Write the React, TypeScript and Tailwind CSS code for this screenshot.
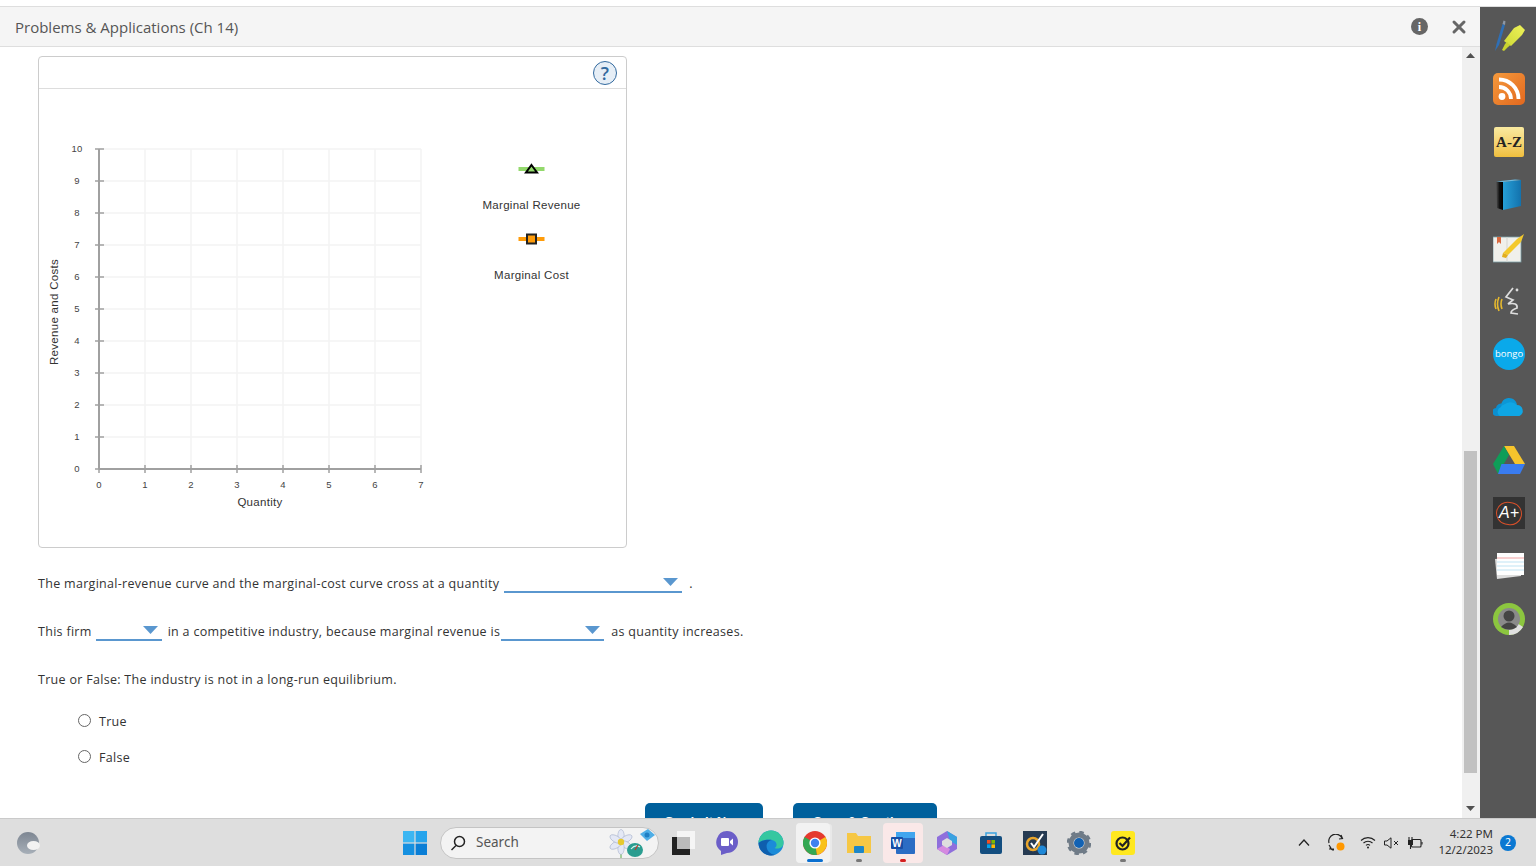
import React from 'react';
import { X } from 'lucide-react';

const bodyFont = "font-['Open_Sans',sans-serif]";

const Chart: React.FC = () => {
  const xs = [99, 145, 191, 237, 283, 329, 375, 421];
  const ys = [469, 437, 405, 373, 341, 309, 277, 245, 213, 181, 149];
  return (
    <svg width="587" height="458" viewBox="39 89 587 458" className="block">
      {xs.slice(1).map(x => <line key={x} x1={x} y1={149} x2={x} y2={469} stroke="#f3f3f3" strokeWidth="1.5" />)}
      {ys.slice(1).map(y => <line key={y} x1={99} y1={y} x2={421} y2={y} stroke="#f3f3f3" strokeWidth="1.5" />)}
      {ys.map(y => <line key={y} x1={95} y1={y} x2={104} y2={y} stroke="#a0a0a0" strokeWidth="1.5" />)}
      {xs.map(x => <line key={x} x1={x} y1={465} x2={x} y2={473} stroke="#a0a0a0" strokeWidth="1.5" />)}
      <line x1={99} y1={149} x2={99} y2={469} stroke="#a0a0a0" strokeWidth="2" />
      <line x1={99} y1={469} x2={421} y2={469} stroke="#a0a0a0" strokeWidth="2" />
      <g fontFamily="Liberation Sans, sans-serif" fontSize="9.5" fill="#444" textAnchor="middle">
        {ys.map((y, i) => <text key={y} x={77} y={y + 3}>{i}</text>)}
        {xs.map((x, i) => <text key={x} x={x} y={488}>{i}</text>)}
      </g>
      <g fontFamily="Liberation Sans, sans-serif" fontSize="11.5" fill="#333" textAnchor="middle">
        <text x={260} y={506}>Quantity</text>
        <text transform="translate(57.5 312) rotate(-90)">Revenue and Costs</text>
        <text x={531.5} y={209}>Marginal Revenue</text>
        <text x={531.5} y={279}>Marginal Cost</text>
      </g>
      <rect x={518.5} y={167} width={26} height={4} fill="#93d96c" />
      <path d="M531.5 165 L537 172.5 H526 Z" fill="#93d96c" stroke="#000" strokeWidth="2" />
      <rect x={518.5} y={237} width={26} height={4} fill="#ff9c0a" />
      <rect x={527} y={234.5} width={9} height={9} fill="#ff9c0a" stroke="#222" strokeWidth="2" />
    </svg>
  );
};

const Dropdown: React.FC<{ width: string }> = ({ width }) => (
  <span className={`inline-flex h-[20px] -mt-[2px] justify-end items-center pr-[4px] pb-[1px] border-b-2 border-[#5a97cf] ${width}`}>
    <svg width="15" height="8" viewBox="0 0 15 8"><path d="M0 0H15L7.5 8Z" fill="#5a97cf" /></svg>
  </span>
);

const Radio: React.FC<{ label: string; className?: string }> = ({ label, className }) => (
  <label className={`flex items-center h-[20px] ml-[78px] ${className ?? ''}`}>
    <span className="w-[13px] h-[13px] -mt-[1px] rounded-full border border-[#666] bg-white" />
    <span className="ml-[8px] pt-[2px] text-[12.5px] tracking-[0.29px] text-[#333]">{label}</span>
  </label>
);

const Pens = () => (
  <svg width="32" height="32" viewBox="0 0 32 32">
    <defs>
      <linearGradient id="hl" x1="0" y1="1" x2="1" y2="0">
        <stop offset="0" stopColor="#cfd936" />
        <stop offset="1" stopColor="#eef25a" />
      </linearGradient>
    </defs>
    <path d="M2 31 L3.5 24 L9.5 4 L12 5 L6 25 Z" fill="#2f6fb5" />
    <path d="M9.5 4 L10.5 0.5 L12.5 1.2 L12 5 Z" fill="#8d98a6" />
    <path d="M11 21 L21 8 L27 5 L32 10 L29 15 L18 26 L15 24 Z" fill="url(#hl)" />
    <path d="M12 24 L15 27 L17 25.5 L14 22 Z M9 30 L12 24 L15 27 L11 31 Z" fill="#c9d32e" />
  </svg>
);

const Rss = () => (
  <svg width="32" height="32" viewBox="0 0 32 32">
    <defs>
      <linearGradient id="rs" x1="0" y1="0" x2="1" y2="1">
        <stop offset="0" stopColor="#f59a3c" />
        <stop offset="1" stopColor="#e2681f" />
      </linearGradient>
    </defs>
    <rect width="32" height="32" rx="5" fill="url(#rs)" />
    <circle cx="9" cy="23.5" r="3.4" fill="#fff" />
    <path d="M6 14 A12 12 0 0 1 18 26" stroke="#fff" strokeWidth="3.8" fill="none" />
    <path d="M6 6.5 A19.5 19.5 0 0 1 25.5 26" stroke="#fff" strokeWidth="3.8" fill="none" />
  </svg>
);

const AZ = () => (
  <div className="w-[30px] h-[30px] rounded-[2px] bg-gradient-to-b from-[#f9eaa0] to-[#f0bf3c] flex items-center justify-center text-[15px] font-bold font-['Liberation_Serif',serif] text-[#222] leading-none">
    A-Z
  </div>
);

const Book = () => (
  <svg width="28" height="32" viewBox="0 0 28 32">
    <defs>
      <linearGradient id="sp" x1="0" y1="0" x2="1" y2="0">
        <stop offset="0" stopColor="#555" />
        <stop offset="0.5" stopColor="#111" />
        <stop offset="1" stopColor="#000" />
      </linearGradient>
      <linearGradient id="cv" x1="0" y1="0" x2="1" y2="0">
        <stop offset="0" stopColor="#26a0d8" />
        <stop offset="1" stopColor="#1372ad" />
      </linearGradient>
    </defs>
    <path d="M1 2.5 L8 3 V31 L2 29 Z" fill="url(#sp)" />
    <path d="M8 3 L26 1 V27 L8 31 Z" fill="url(#cv)" />
    <path d="M1 2.5 L20 0.5 L26 1 L8 3 Z" fill="#6dbce2" />
  </svg>
);

const Notebook = () => (
  <svg width="32" height="32" viewBox="0 0 32 32">
    <rect x="0" y="5" width="28" height="25" fill="#f0f0eb" stroke="#7ea0a8" strokeWidth="0.8" />
    <path d="M14 5 V30" stroke="#d5d5d0" />
    <path d="M4 5 H8 V12 L6 10 L4 12 Z" fill="#d9693f" />
    <path d="M10 21 L24 7 L31 2 L28 10 L15 23 Z" fill="#f3c92c" />
    <path d="M10 21 L15 23 L13 26 L9 25 Z" fill="#e2ae1e" />
  </svg>
);

const Speech = () => (
  <svg width="32" height="32" viewBox="0 0 32 32">
    <path d="M3 14 Q1 19 3 24 M6 12 Q3 19 6 26 M9 14 Q7 19 9 24" stroke="#e6b92e" strokeWidth="1.6" fill="none" />
    <path d="M20 3 L13 12 L20 15 L15 19 Q25 17 24 23 Q18 25 18 28 L25 29" stroke="#ddd" strokeWidth="1.7" fill="none" />
    <circle cx="24" cy="5" r="1.4" fill="#ddd" />
  </svg>
);

const Bongo = () => (
  <div className="w-[32px] h-[32px] rounded-full bg-[#0aa9ea] flex items-center justify-center text-[9.5px] text-white font-['Open_Sans',sans-serif] leading-none">
    bongo
  </div>
);

const Cloud = () => (
  <svg width="32" height="22" viewBox="0 0 32 22">
    <path d="M8 20 H4 A4 4 0 0 1 3 12 A5 5 0 0 1 10 8 L8 20 Z" fill="#0b8fd0" />
    <path d="M7 20 A5 5 0 0 1 8 11 A8.5 8.5 0 0 1 24 9 A5.8 5.8 0 0 1 26.5 20 Z" fill="#0fa6e4" />
    <path d="M8 10 A8 8 0 0 1 19 2.5 A8.5 8.5 0 0 1 24 9 A9 9 0 0 0 14 7 Z" fill="#0c97d6" />
  </svg>
);

const Drive = () => (
  <svg width="32" height="28" viewBox="0 0 32 28">
    <path d="M11 0 H21 L32 18 H22 Z" fill="#f6c42c" />
    <path d="M11 0 L0 18 L5 28 L16 9 Z" fill="#0f9d58" />
    <path d="M8.5 18 H32 L27 28 H5 Z" fill="#3a7cf0" />
  </svg>
);

const APlus = () => (
  <div className="relative w-[32px] h-[32px] bg-[#333] flex items-center justify-center">
    <span className="absolute left-[3px] top-[5px] w-[26px] h-[23px] rounded-full border-[1.5px] border-[#d8502a] rotate-12" />
    <span className="relative text-[16px] italic text-white font-['Liberation_Sans',sans-serif] leading-none">A+</span>
  </div>
);

const Cards = () => (
  <svg width="32" height="28" viewBox="0 0 32 28">
    <path d="M2 7 L28 5 V24 L4 27 Z" fill="#ddd" />
    <rect x="4" y="1" width="27" height="22" fill="#fff" />
    <path d="M4 6 H31" stroke="#f2a3a3" />
    <path d="M4 10 H31 M4 14 H31 M4 18 H31" stroke="#bfe3f3" />
  </svg>
);

const Profile = () => (
  <svg width="32" height="32" viewBox="0 0 32 32">
    <circle cx="16" cy="16" r="16" fill="#8cc63f" />
    <path d="M16 32 A16 16 0 0 0 30 24 L24 20 A9 9 0 0 1 16 27 Z" fill="#e0e0e0" />
    <circle cx="16" cy="16" r="11" fill="#8a8a8a" />
    <circle cx="16" cy="13" r="5.5" fill="#444" />
    <path d="M8 24 Q16 15 24 24 Q16 29 8 24 Z" fill="#444" />
  </svg>
);

const sideIcons = [Pens, Rss, AZ, Book, Notebook, Speech, Bongo, Cloud, Drive, APlus, Cards, Profile];

const TaskSlot: React.FC<{ bg?: string; mark?: string; children: React.ReactNode }> = ({ bg, mark, children }) => (
  <div className="relative w-[44px] h-[48px] flex items-center justify-center">
    {bg && <span className={`absolute top-[4px] bottom-[4px] rounded-[4px] ${bg}`} />}
    <span className="relative flex">{children}</span>
    {mark && <span className={`absolute bottom-[5px] left-1/2 -translate-x-1/2 h-[3px] rounded-full ${mark}`} />}
  </div>
);

const Taskbar: React.FC = () => (
  <div className="h-[48px] flex items-center bg-[#dedede] border-t border-[#cacaca] pl-[17px] font-['Noto_Sans',sans-serif]">
    <svg width="24" height="24" viewBox="0 0 24 24">
      <defs>
        <linearGradient id="mn" x1="0" y1="0" x2="0" y2="1">
          <stop offset="0" stopColor="#7d8692" />
          <stop offset="1" stopColor="#a7afb8" />
        </linearGradient>
      </defs>
      <circle cx="11" cy="12" r="11" fill="url(#mn)" />
      <ellipse cx="16.5" cy="14.5" rx="6.5" ry="4.5" fill="#f2f2f2" />
    </svg>
    <svg width="24" height="24" viewBox="0 0 24 24" className="ml-[362px]">
      <rect width="11.4" height="11.4" fill="#3cb6f2" />
      <rect x="12.6" width="11.4" height="11.4" fill="#26a4ec" />
      <rect y="12.6" width="11.4" height="11.4" fill="#1590e0" />
      <rect x="12.6" y="12.6" width="11.4" height="11.4" fill="#0a7ed6" />
    </svg>
    <div className="relative ml-[13px] w-[219px] h-[32px] rounded-full bg-[#f3f3f3] border border-[#c4c4c4] flex items-center pl-[9px]">
      <svg width="16" height="16" viewBox="0 0 16 16" fill="none" stroke="#222" strokeWidth="1.5">
        <circle cx="9.5" cy="6.5" r="5" />
        <path d="M6 10.5 L1.5 15" />
      </svg>
      <span className="ml-[10px] text-[13.5px] text-[#555]">Search</span>
      <svg width="52" height="30" viewBox="0 0 52 30" className="absolute right-[1px] top-0">
        <path d="M16 18 V30" stroke="#5aa845" strokeWidth="1" />
        {[0, 60, 120, 180, 240, 300].map(a => (
          <ellipse key={a} cx="16" cy="8" rx="3.2" ry="6.5" fill="#e4e8f5" stroke="#98a4c2" strokeWidth="0.5" transform={`rotate(${a} 16 14)`} />
        ))}
        <circle cx="16" cy="14" r="3.2" fill="#e6c92f" />
        <ellipse cx="30" cy="22" rx="8" ry="7" fill="#2a9d90" />
        <path d="M26 21 Q30 16 35 19" stroke="#d8f0ea" strokeWidth="1.2" fill="none" />
        <path d="M30 22 L33 17" stroke="#c0392b" strokeWidth="1.2" />
        <path d="M35 6 L43 1 L50 7 L42 13 Z" fill="#4faee6" />
        <circle cx="42" cy="7" r="2.5" fill="#1f7fc4" />
      </svg>
    </div>
    <div className="ml-[2px] flex items-center">
      <TaskSlot>
        <svg width="24" height="24" viewBox="0 0 24 24">
          <rect x="1" y="6" width="18" height="18" fill="#222" />
          <rect x="6" y="0" width="18" height="18" fill="#f5f5f5" />
          <rect x="6" y="6" width="13" height="12" fill="#bbb" />
        </svg>
      </TaskSlot>
      <TaskSlot>
        <svg width="24" height="26" viewBox="0 0 24 26">
          <path d="M12 1 A11 11 0 0 1 12 23 L6 25 V21 A11 11 0 0 1 12 1 Z" fill="#6b5ec8" />
          <rect x="6" y="8" width="8" height="8" rx="1" fill="#fff" />
          <path d="M15 11 L18 8.5 V15.5 L15 13 Z" fill="#fff" />
        </svg>
      </TaskSlot>
      <TaskSlot>
        <svg width="26" height="26" viewBox="0 0 26 26">
          <circle cx="13" cy="13" r="12.5" fill="#1b8bd8" />
          <path d="M0.5 13 A12.5 12.5 0 0 1 25.5 13 C25.5 18 20 19.5 16.5 18 C20 16 19 11 14 10 C8 9 3 11 0.5 13 Z" fill="#35c7a0" />
          <path d="M0.5 13 C3 11 8 9 14 10 C8 11 7 18 11 22 C13 24 16 25.5 18 24.5 A12.5 12.5 0 0 1 0.5 13 Z" fill="#0f5fae" />
        </svg>
      </TaskSlot>
      <TaskSlot bg="bg-[#f2f2f2] left-[3px] right-[7px] shadow-[3px_0_0_-1px_#e9e9e9]" mark="w-[16px] bg-[#0a6fd0]">
        <svg width="24" height="24" viewBox="0 0 24 24">
          <circle cx="12" cy="12" r="12" fill="#e53a2f" />
          <path d="M12 12 L1.6 6 A12 12 0 0 0 14 23.8 Z" fill="#34a853" />
          <path d="M12 12 L14 23.8 A12 12 0 0 0 22.4 6 Z" fill="#f9c21a" />
          <circle cx="12" cy="12" r="5.6" fill="#fff" />
          <circle cx="12" cy="12" r="4.2" fill="#3f82ee" />
        </svg>
      </TaskSlot>
      <TaskSlot mark="w-[6px] bg-[#777]">
        <svg width="24" height="22" viewBox="0 0 24 22">
          <path d="M0 1 H9 L11 4 H24 V21 H0 Z" fill="#f6c744" />
          <rect x="7" y="14" width="10" height="7" rx="1" fill="#1c86c8" />
        </svg>
      </TaskSlot>
      <TaskSlot bg="bg-[#fae8e8] left-[2px] right-[2px]" mark="w-[6px] bg-[#d42020]">
        <svg width="24" height="22" viewBox="0 0 24 22">
          <rect x="5" y="0" width="19" height="22" rx="1" fill="#2b6cc4" />
          <rect x="5" y="0" width="19" height="6" fill="#41a5ee" />
          <rect x="0" y="5" width="12" height="12" rx="1" fill="#174ea6" />
          <text x="6" y="15" textAnchor="middle" fontSize="10" fontWeight="700" fill="#fff" fontFamily="Liberation Sans, sans-serif">W</text>
        </svg>
      </TaskSlot>
      <TaskSlot>
        <svg width="22" height="24" viewBox="0 0 22 24">
          <path d="M11 0 L21 6 V18 L11 24 L1 18 V6 Z" fill="#8f6fdc" />
          <path d="M11 0 L21 6 V14 L14 10 Z" fill="#3aa2e0" />
          <path d="M1 18 L8 14 L14 18 L11 24 Z" fill="#d58ae0" />
          <path d="M11 7 L16 10 V14 L11 17 L6 14 V10 Z" fill="#dedede" />
        </svg>
      </TaskSlot>
      <TaskSlot>
        <svg width="24" height="24" viewBox="0 0 24 24">
          <path d="M7 6 V2 H17 V6" fill="none" stroke="#3aa2e0" strokeWidth="1.5" />
          <rect x="1" y="5" width="22" height="18" rx="2" fill="#134e80" />
          <rect x="8" y="9" width="3.6" height="3.6" fill="#f25022" />
          <rect x="12.4" y="9" width="3.6" height="3.6" fill="#7fba00" />
          <rect x="8" y="13.4" width="3.6" height="3.6" fill="#00a4ef" />
          <rect x="12.4" y="13.4" width="3.6" height="3.6" fill="#ffb900" />
        </svg>
      </TaskSlot>
      <TaskSlot>
        <svg width="24" height="24" viewBox="0 0 24 24">
          <rect width="24" height="24" fill="#253a52" />
          <circle cx="10" cy="13" r="6" fill="none" stroke="#e8a52c" strokeWidth="2.5" />
          <path d="M8 12 L11 16 L20 3" fill="none" stroke="#fff" strokeWidth="2" />
          <circle cx="19" cy="19" r="4.5" fill="#1e88d8" />
        </svg>
      </TaskSlot>
      <TaskSlot>
        <svg width="24" height="24" viewBox="0 0 24 24">
          <circle cx="12" cy="12" r="8" fill="none" stroke="#6f7b87" strokeWidth="5" />
          <circle cx="12" cy="12" r="11" fill="none" stroke="#6f7b87" strokeWidth="2.5" strokeDasharray="4.5 4.14" />
          <circle cx="12" cy="12" r="5" fill="#1262b3" />
        </svg>
      </TaskSlot>
      <TaskSlot mark="w-[6px] bg-[#777]">
        <svg width="24" height="24" viewBox="0 0 24 24">
          <rect width="24" height="24" rx="3" fill="#ffe81f" />
          <circle cx="11.5" cy="12.5" r="6" fill="none" stroke="#222" strokeWidth="2.2" />
          <path d="M8.5 12 L11.5 15 L19 6.5" fill="none" stroke="#222" strokeWidth="2.2" />
        </svg>
      </TaskSlot>
    </div>
    <div className="ml-auto flex items-center pr-[20px]">
      <svg width="12" height="7" viewBox="0 0 12 7" fill="none" stroke="#222" strokeWidth="1.3">
        <path d="M1 6.5 L6 1 L11 6.5" />
      </svg>
      <svg width="18" height="18" viewBox="0 0 18 18" className="ml-[18px]" fill="none" stroke="#222" strokeWidth="1.2">
        <path d="M1 9 A7 7 0 0 1 14 4 M13 1 L14.5 4.5 L11 5" />
        <path d="M3 14 L1 11 M1 15 H6 M2 13 Q3 16 6 16" />
        <circle cx="12.5" cy="12.5" r="4" fill="#ff9800" stroke="none" />
      </svg>
      <svg width="16" height="13" viewBox="0 0 16 13" className="ml-[14px]" fill="none" stroke="#222" strokeWidth="1.1">
        <path d="M1 4.5 A10 10 0 0 1 15 4.5 M3.5 7 A6.5 6.5 0 0 1 12.5 7 M6 9.4 A3 3 0 0 1 10 9.4" />
        <circle cx="8" cy="11.6" r="1" fill="#222" stroke="none" />
      </svg>
      <svg width="15" height="12" viewBox="0 0 15 12" className="ml-[8px]" fill="none" stroke="#222" strokeWidth="1">
        <path d="M0.5 4 H3 L7 0.8 V11.2 L3 8 H0.5 Z" />
        <path d="M10 4 L14 8 M14 4 L10 8" />
      </svg>
      <svg width="16" height="12" viewBox="0 0 16 12" className="ml-[8px]" fill="none" stroke="#222" strokeWidth="1.1">
        <rect x="4.5" y="2.5" width="9.5" height="7.5" rx="1" />
        <path d="M15 5 V7.5" />
        <rect x="1" y="3" width="5" height="5" fill="#222" stroke="none" />
        <path d="M2 0 V3 M5 0 V3 M3.5 8 V12" />
      </svg>
      <div className="ml-[12px] -mt-[2px] w-[58px] text-right text-[11.5px] leading-[16px] text-[#333]">
        <div>4:22 PM</div>
        <div>12/2/2023</div>
      </div>
      <span className="ml-[7px] w-[16px] h-[16px] rounded-full bg-[#0a78d2] text-white text-[10.5px] leading-none flex items-center justify-center">2</span>
    </div>
  </div>
);

export default function App() {
  return (
    <div className={`h-screen flex flex-col overflow-hidden bg-white ${bodyFont}`}>
      <div className="h-[7px] shrink-0 bg-white border-b border-[#dedede]" />
      <div className="flex-1 min-h-0 flex">
        <div className="flex-1 min-w-0 flex flex-col">
          <div className="h-[40px] shrink-0 bg-[#f5f5f5] border-b border-[#dedede] flex items-center pl-[15px] pr-[11px]">
            <span className="pt-[1px] text-[15px] text-[#555]">Problems &amp; Applications (Ch 14)</span>
            <span className="ml-auto w-[17px] h-[17px] rounded-full bg-[#666] text-white text-[12px] font-bold leading-none flex items-center justify-center font-['Liberation_Serif',serif]">i</span>
            <X size={20} strokeWidth={3.6} className="ml-[21px] text-[#666]" />
          </div>
          <div className="flex-1 min-h-0 flex">
            <div className="flex-1 min-w-0 overflow-hidden text-[12.5px] tracking-[0.3px] text-[#333]">
              <div className="ml-[38px] mt-[9px] w-[589px] h-[492px] border border-[#ccc] rounded-[4px] bg-white">
                <div className="h-[32px] border-b border-[#ddd] flex items-center justify-end pr-[9px]">
                  <span className="w-[24px] h-[24px] rounded-full bg-[#e6eef6] border-[1.5px] border-[#336a9f] text-[#336a9f] text-[18px] font-semibold leading-none flex items-center justify-center">?</span>
                </div>
                <Chart />
              </div>
              <div className="ml-[38px] mt-[23px] h-[24px] pt-[2px] flex items-center whitespace-nowrap">
                The marginal-revenue curve and the marginal-cost curve cross at a quantity
                <Dropdown width="w-[178px] ml-[5px]" />
                <span className="ml-[7px]">.</span>
              </div>
              <div className="ml-[38px] mt-[24px] h-[24px] pt-[2px] flex items-center whitespace-nowrap">
                This firm
                <Dropdown width="w-[66px] ml-[4px]" />
                <span className="ml-[6px]">in a competitive industry, because marginal revenue is</span>
                <Dropdown width="w-[103px] ml-[1px]" />
                <span className="ml-[7px]">as quantity increases.</span>
              </div>
              <div className="ml-[38px] mt-[24px] h-[24px] pt-[2px] flex items-center">True or False: The industry is not in a long-run equilibrium.</div>
              <Radio label="True" className="mt-[20px]" />
              <Radio label="False" className="mt-[16px]" />
              <div className="mt-[36px] ml-[645px] flex gap-[30px] font-['Liberation_Sans',sans-serif]">
                <div className="w-[118px] h-[40px] rounded-t-[5px] bg-[#00609c] pt-[9px] text-center text-white text-[13px] font-bold tracking-normal">Grade It Now</div>
                <div className="w-[144px] h-[40px] rounded-t-[5px] bg-[#00609c] pt-[9px] text-center text-white text-[13px] font-bold tracking-normal">Save &amp; Continue</div>
              </div>
            </div>
            <div className="w-[18px] shrink-0 bg-[#f0f0f0] pr-[1px] flex flex-col items-center">
              <svg width="9" height="5" viewBox="0 0 9 5" className="mt-[6px] shrink-0"><path d="M0 5 L4.5 0 L9 5 Z" fill="#505050" /></svg>
              <div className="w-[13px] h-[322px] mt-[393px] bg-[#c1c1c1]" />
              <svg width="9" height="5" viewBox="0 0 9 5" className="mt-[33px] shrink-0"><path d="M0 0 L4.5 5 L9 0 Z" fill="#505050" /></svg>
            </div>
          </div>
        </div>
        <div className="w-[56px] shrink-0 bg-[#575757] flex flex-col items-center pt-[13px] pl-[2px] gap-[21px]">
          {sideIcons.map((Icon, i) => (
            <div key={i} className="h-[32px] flex items-center justify-center">
              <Icon />
            </div>
          ))}
        </div>
      </div>
      <Taskbar />
    </div>
  );
}
